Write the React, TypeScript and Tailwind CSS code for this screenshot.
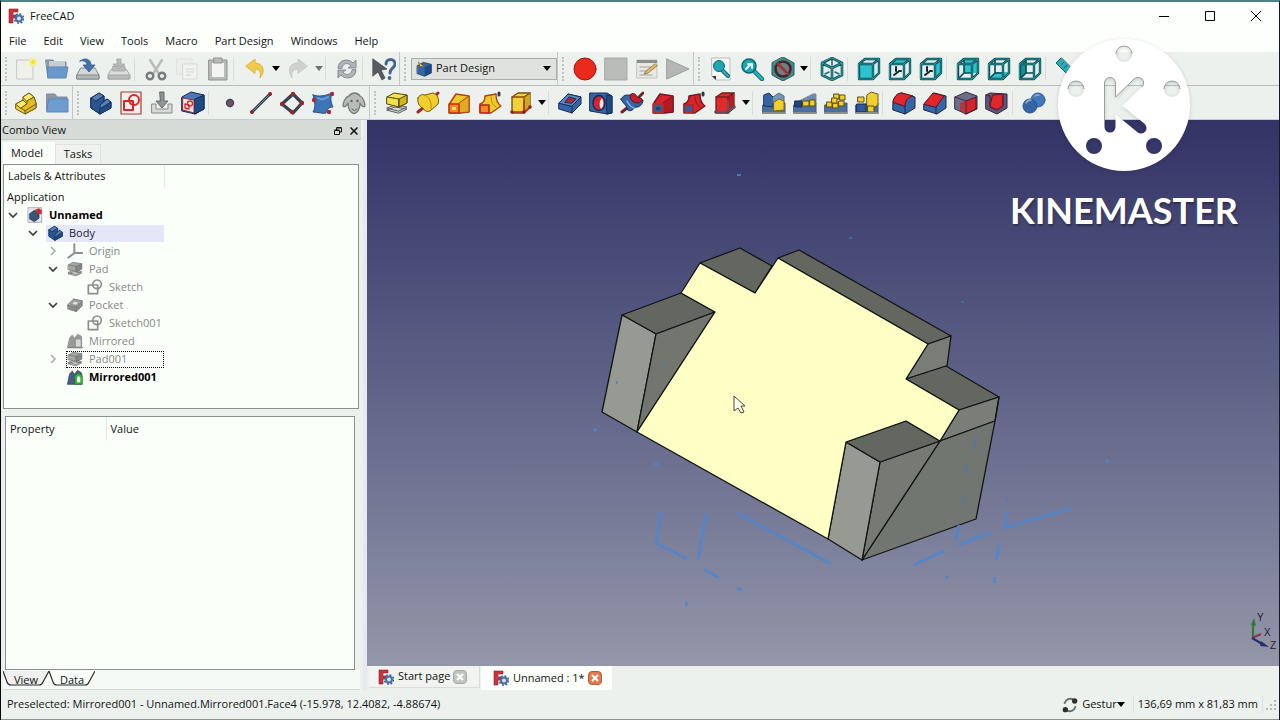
import React from "react";
import type { ReactNode } from "react";

/* ---------- toolbar glyphs, all on a 24 x 24 grid ---------- */

const Glyph = ({ children, size = "size-6" }: { children: ReactNode; size?: string }) => (
  <svg viewBox="0 0 24 24" className={`${size} shrink-0`} strokeLinejoin="round" strokeLinecap="round" fill="none" aria-hidden="true">
    {children}
  </svg>
);

const FreeCadLogo = ({ size = "size-4" }: { size?: string }) => (
  <svg viewBox="0 0 16 16" className={`${size} shrink-0`} aria-hidden="true">
    <path d="M1 1h9v3H5v3h3v3H5v5H1z" fill="#cb333b" stroke="#8f1d25" strokeWidth=".6" />
    <circle cx="11" cy="10.500" r="4.600" fill="none" stroke="#3d5f94" strokeWidth="1.600" strokeDasharray="1.900 1.700" />
    <circle cx="11" cy="10.500" r="3" fill="#d7e2f2" stroke="#4a6ea6" strokeWidth="2" />
  </svg>
);

const NewDoc = () => (
  <Glyph>
    <path d="M3 3h16v19H3z" fill="#f1f1ec" stroke="#c6c8c2" />
    <circle cx="19" cy="5" r="4" fill="#f7f08a" />
    <circle cx="19" cy="5" r="2" fill="#f4e32a" />
  </Glyph>
);
const Folder = () => (
  <Glyph>
    <path d="M2 3h8l2 3h10v13H2z" fill="#8797a8" stroke="#7e8b99" />
    <path d="M4 8h19v13H2z" fill="#6e9ccf" stroke="#5a87bd" />
  </Glyph>
);
const OpenDoc = () => (
  <Glyph>
    <path d="M1 3h7l2 2h11v14H3z" fill="#8b98a8" stroke="#7e8997" />
    <path d="M4 4h16v7H4z" fill="#c5ccd3" />
    <path d="M3 10h20l-2 11H3z" fill="#6c97cb" stroke="#5b86bb" />
  </Glyph>
);
const SaveDoc = () => (
  <Glyph>
    <path d="M5 11h14l4 7v4H1v-4z" fill="#d4d7d4" stroke="#84898c" />
    <path d="M1 18h22v4H1z" fill="#b3b8b8" stroke="#84898c" />
    <path d="M4 4C9 0 15 2 15 8h4l-6 7-6-7h4c0-3-3-5-7-4z" fill="#4472ad" stroke="#2f5a94" strokeWidth=".8" />
  </Glyph>
);
const SaveGrey = () => (
  <Glyph>
    <path d="M5 12h14l4 6v4H1v-4z" fill="#dcdedb" stroke="#a1a5a3" />
    <path d="M2 18h20v4H2z" fill="#b9bcba" stroke="#a1a5a3" />
    <path d="M6 9h12v5H6zM10 2h4v5h4l-6 5-6-5h4z" fill="#b9bcba" stroke="#a1a5a3" strokeWidth=".8" />
  </Glyph>
);
const Scissors = () => (
  <Glyph>
    <path d="M6 3l9 14M18 3L9 17" stroke="#b8bbb9" strokeWidth="2.500" />
    <circle cx="6" cy="19" r="3.300" stroke="#777c7d" strokeWidth="2.400" />
    <circle cx="18" cy="19" r="3.300" stroke="#777c7d" strokeWidth="2.400" />
  </Glyph>
);
const CopyIcon = () => (
  <Glyph>
    <path d="M2 2h15v15H2z" fill="#eceeea" stroke="#dfe2de" />
    <path d="M8 7h14v15H8z" fill="#f3f4f1" stroke="#d5d8d4" />
    <path d="M11 12h8M11 15h8M11 18h5" stroke="#d0d3d0" />
  </Glyph>
);
const PasteIcon = () => (
  <Glyph>
    <path d="M3 3h18v20H3z" fill="#b9bbb8" stroke="#8e9290" />
    <path d="M6 6h12v14H6z" fill="#f4f5f2" />
    <path d="M8 1h8v5H8z" fill="#b9bbb8" stroke="#8e9290" />
  </Glyph>
);
const UndoIcon = () => (
  <Glyph>
    <path d="M3 9l9-7v4c8 0 11 8 5 15 1-6 0-9-5-9v4z" fill="#f0ca4a" stroke="#e0b53a" />
  </Glyph>
);
const RedoIcon = () => (
  <Glyph>
    <path d="M21 9l-9-7v4C3 6 1 14 6 21c-1-6 1-9 6-9v4z" fill="#cfd1ce" stroke="#c6c9c6" />
  </Glyph>
);
const RefreshIcon = () => (
  <Glyph>
    <path d="M3 11C3 2 14 1 18 6l3-3v8h-8l3-2c-3-4-8-3-9 2zM21 13c0 9-11 10-15 5l-3 3v-8h8l-3 2c3 4 8 3 9-2z" fill="#aeb4b7" stroke="#80878b" strokeWidth=".9" />
  </Glyph>
);
const WhatsThis = () => (
  <Glyph>
    <path d="M1 2l14 10-6 1 4 8-3 2-4-8-5 4z" fill="#555b60" stroke="#3b4044" strokeWidth=".7" />
    <path d="M14 7c0-6 9-6 9 0 0 4-5 4-5 9" stroke="#43658f" strokeWidth="3" />
    <circle cx="17.500" cy="21" r="1.900" fill="#43658f" />
  </Glyph>
);
const RecordIcon = () => (
  <Glyph>
    <circle cx="12" cy="12" r="11" fill="#ea2a1d" stroke="#9a1a12" />
  </Glyph>
);
const StopIcon = () => (
  <Glyph>
    <path d="M1 1h22v22H1z" fill="#b9bbb9" stroke="#a6a9a6" />
  </Glyph>
);
const MacroEdit = () => (
  <Glyph>
    <path d="M2 3h20v18H2z" fill="#e7e8e3" stroke="#c3c5c0" />
    <path d="M2 3h20v3H2z" fill="#8d918e" />
    <path d="M5 10h11M5 14h8M5 18h12" stroke="#b7b9b5" strokeWidth="1.500" />
    <path d="M22 9l-9 7-4 1 2-3 9-7z" fill="#e7b96a" stroke="#8b6b35" strokeWidth=".8" />
  </Glyph>
);
const PlayIcon = () => (
  <Glyph>
    <path d="M1 2l22 10L1 22z" fill="#b4b7b5" stroke="#9b9f9c" />
  </Glyph>
);
const FitAll = () => (
  <Glyph>
    <path d="M3 1h18v22H7l-4-4z" fill="#f6f7f5" stroke="#b9bcba" />
    <path d="M13 13l6 6" stroke="#0b6670" strokeWidth="4" />
    <path d="M13 13l6 6" stroke="#26b3c0" strokeWidth="2" />
    <circle cx="10" cy="9" r="5.500" fill="#1fa6b3" stroke="#0b6670" />
    <path d="M3 19l4 4v-4z" fill="#333" />
  </Glyph>
);
const FitSelection = () => (
  <Glyph>
    <path d="M13 13l9 9" stroke="#0b6670" strokeWidth="4.500" />
    <path d="M13 13l9 9" stroke="#26b3c0" strokeWidth="2.500" />
    <circle cx="9" cy="9" r="7" fill="#1fa6b3" stroke="#0b6670" strokeWidth="1.500" />
    <path d="M6 12l5-5M8 7h4v4" stroke="#d9f7fa" strokeWidth="2" />
  </Glyph>
);
const DrawStyle = () => (
  <Glyph>
    <path d="M12 0l11 6v12l-11 6-11-6V6z" fill="#3c8c8c" stroke="#235f60" />
    <circle cx="12" cy="12" r="7.500" fill="#6f7f7f" stroke="#4a2428" strokeWidth="2.600" />
    <path d="M7 7l10 10" stroke="#a03236" strokeWidth="2.600" />
  </Glyph>
);
const IsoCube = () => (
  <Glyph>
    <path d="M12 1l10 5v12l-10 5-10-5V6z" fill="#e2efee" />
    <path d="M12 1l10 5v12l-10 5-10-5V6zM2 6l10 5 10-5M12 11v12" stroke="#0c4a50" strokeWidth="2.600" />
    <path d="M12 3v5M5 17l4-2M19 17l-4-2" stroke="#2c6c70" strokeWidth="1.600" />
    <path d="M12 1l10 5v12l-10 5-10-5V6zM2 6l10 5 10-5M12 11v12" stroke="#3aa7ae" strokeWidth="1" />
  </Glyph>
);
const faces: Record<string, string> = {
  front: "M2 7h14v15H2z",
  top: "M2 7l6-5h14l-6 5z",
  right: "M16 7l6-5v14l-6 6z",
  rear: "M8 3h13v13H8z",
  bottom: "M2 22l6-7h14l-6 7z",
  left: "M2 7l6-5v14l-6 6z",
};
const ViewCube = ({ face }: { face: string }) => (
  <Glyph>
    <path d="M2 7l6-5h14v14l-6 6H2z" fill={face === "front" ? "#cdeef0" : "#e2efee"} />
    <path d={faces[face]} fill={face === "left" ? "#178f97" : "#2bc3cf"} />
    {(face === "rear" || face === "bottom" || face === "left") && (
      <path d="M8 3v13l-5 5M8 16h8" stroke="#0c4a50" strokeWidth="1.600" />
    )}
    {(face === "top" || face === "right") && <path d="M8 10v4M6 18l4-3M11 14h2" stroke="#16282b" strokeWidth="2" />}
    <path d="M2 7h14v15H2zM2 7l6-5h14l-6 5M22 2v14l-6 6" stroke="#0c4a50" strokeWidth="2.400" />
    <path d="M2 7h14v15H2zM2 7l6-5h14l-6 5M22 2v14l-6 6" stroke="#2fa9b2" strokeWidth=".8" />
  </Glyph>
);
const Ruler = () => (
  <Glyph>
    <path d="M6 1L1 6l17 17 5-5z" fill="#2cabb5" stroke="#0c5f67" />
    <path d="M9 5l-2 2M12 8l-3 3M15 11l-2 2M18 14l-3 3" stroke="#0c5f67" />
  </Glyph>
);

const PartYellow = () => (
  <Glyph>
    <g stroke="#6f5a10">
      <path d="M2 13l7-4V6l6-4 5 4 2 6v5l-11 6-9-5z" fill="#eccf34" />
      <path d="M9 6l6-4 5 4-7 4zM2 13l7-4 4 4-6 4z" fill="#fbea70" />
      <path d="M7 17l6-4v-3l7-4 2 6v5l-11 6v-3z" fill="#dfbc28" />
      <path d="M11 20l11-7" />
    </g>
  </Glyph>
);
const BodyBlue = ({ size }: { size?: string }) => (
  <Glyph size={size}>
    <g stroke="#1a3260">
      <path d="M3 7l8-5 5 3v5l3-2 4 3v6l-11 6-9-6z" fill="#3465a4" />
      <path d="M3 7l8-5 5 3-8 5zM12 14l7-6 4 3-11 7z" fill="#5581b8" />
      <path d="M8 10l8-5v5l-4 4v9l-9-6V7z" fill="#2b5693" />
      <path d="M12 18l11-7v6l-11 6z" fill="#244b86" />
    </g>
  </Glyph>
);
const SketchRed = () => (
  <Glyph>
    <path d="M2 1h20v22H2z" fill="#f7efec" stroke="#a33a3a" strokeWidth="1.200" />
    <path d="M5 10h9v9H5z" stroke="#d22828" strokeWidth="2" />
    <circle cx="15" cy="9" r="5" stroke="#d22828" strokeWidth="2" />
  </Glyph>
);
const ImportSketch = () => (
  <Glyph>
    <path d="M2 13h4v5h12v-5h4v9H2z" fill="#d8dad7" stroke="#85898a" />
    <path d="M10 1h4v9h4l-6 7-6-7h4z" fill="#8f9394" stroke="#65696b" />
  </Glyph>
);
const MapSketch = () => (
  <Glyph>
    <path d="M1 6l9-5 13 3v14l-9 5-13-3z" fill="#4a79b8" stroke="#15294f" />
    <path d="M14 8l9-4v14l-9 5z" fill="#204a87" stroke="#15294f" />
    <path d="M2 7l11 2v13L2 19z" fill="#f3e2e2" stroke="#802f3a" />
    <path d="M4 13l4 1v4l-4-1z" stroke="#d22828" strokeWidth="1.300" />
    <circle cx="9" cy="12.500" r="2.500" stroke="#d22828" strokeWidth="1.300" />
  </Glyph>
);
const PointIcon = () => <Glyph><circle cx="12" cy="12" r="3.500" fill="#75525f" stroke="#3f4657" strokeWidth="1.400" /></Glyph>;
const LineIcon = () => (
  <Glyph>
    <path d="M3 21L21 3" stroke="#36404c" strokeWidth="3" />
    <path d="M3 21L21 3" stroke="#7a8894" />
    <circle cx="3" cy="21" r="2" fill="#8b2430" />
    <circle cx="21" cy="3" r="2" fill="#8b2430" />
  </Glyph>
);
const PlaneIcon = () => (
  <Glyph>
    <path d="M2 13L13 3l9 9-9 10z" stroke="#38414d" strokeWidth="3.200" />
    {[[2, 13], [13, 3], [22, 12], [12, 21]].map(([x, y]) => <circle key={x} cx={x} cy={y} r="2.200" fill="#9b2632" />)}
  </Glyph>
);
const ShapeBinder = () => (
  <Glyph>
    <path d="M2 4c6 2 12 1 19-2-2 5-1 10 1 14-5 0-6 3-7 6-4 1-8-1-13-1 3-5 2-10 0-17z" fill="#3d74b5" stroke="#234f8a" />
    <path d="M7 7c3 2 7 1 10-1" stroke="#6f9fd4" strokeWidth="2" />
    {[[3, 9], [21, 3], [18, 21]].map(([x, y]) => <circle key={x} cx={x} cy={y} r="2.200" fill="#a52a3a" />)}
  </Glyph>
);
const SheepIcon = () => (
  <Glyph>
    <path d="M7 5c3-4 8-4 11 0 3 1 5 7 5 10-2 2-4-1-5-3 0 5-2 8-3 9-2 2-4 2-6 0-1-1-3-4-3-9-1 2-3 5-5 3 0-3 2-9 6-10z" fill="#b9bcb9" stroke="#777c7c" strokeWidth="1.300" />
    <circle cx="9.500" cy="10" r="1.200" fill="#626767" />
    <circle cx="15.500" cy="10" r="1.200" fill="#626767" />
    <path d="M10 18l2.500 1.500L15 18" stroke="#626767" />
  </Glyph>
);

const PadIcon = ({ grey, size }: { grey?: boolean; size?: string }) => {
  const s = grey ? "#6f7271" : "#4d4708";
  const f = grey ? "#a3a6a4" : "#f4e04a";
  const d = grey ? "#858886" : "#d1b51d";
  return (
    <Glyph size={size}>
      <path d="M2 19l8-3 12 2-8 4zM2 17l8-3 12 2-8 4z" fill="#d9dbd8" stroke="#5c605e" />
      <path d="M2 6l7-4 13 2v8l-8 4-12-3z" fill={f} stroke={s} />
      <path d="M14 8l8-4v8l-8 4z" fill={d} stroke={s} />
      <path d="M2 6l12 2v8" stroke={s} />
    </Glyph>
  );
};
const RevolveIcon = () => (
  <Glyph>
    <path d="M2 21l6-5M18 6l4-4" stroke="#a52828" strokeWidth="3" />
    <path d="M2 7c1-3 4-4 7-3l8-2c4 1 7 6 5 11l-8 7c-3 1-6 0-7-3-4-1-6-6-5-10z" fill="#efce2d" stroke="#6f5a10" />
    <path d="M9 4c4 2 7 7 6 14" stroke="#b08f16" />
  </Glyph>
);
const LoftIcon = ({ red }: { red?: boolean }) => (
  <Glyph>
    <path d="M3 12L9 3l13 2v16l-9 1H3z" fill={red ? "#d8232a" : "#f0c92b"} stroke={red ? "#6e1a24" : "#b54216"} strokeWidth="1.600" />
    <path d="M12 12L22 5v16l-10 1z" fill={red ? "#b31a22" : "#e0ac1e"} stroke={red ? "#6e1a24" : "#b54216"} />
    <path d="M2 13h10v9H2z" fill={red ? "#3b5a94" : "#ef8a1e"} stroke="#c22a1e" strokeWidth="1.600" />
    <path d="M5 16h4v3H5z" fill={red ? "#24406f" : "#f9d56a"} />
  </Glyph>
);
const PipeIcon = ({ red }: { red?: boolean }) => (
  <Glyph>
    <path d="M7 5l11-2c0 5 2 10 5 12l-10 7-11-1v-8c3-1 5-4 5-8z" fill={red ? "#d8232a" : "#f0c92b"} stroke={red ? "#6e1a24" : "#a84416"} strokeWidth="1.400" />
    <path d="M13 6c0 5 2 8 5 10" stroke={red ? "#8c1a22" : "#b58a18"} />
    <path d="M2 14h9v8H2z" fill={red ? "#3b5a94" : "#ef8a1e"} stroke="#b5251c" strokeWidth="1.600" />
    <path d="M21 2v2" stroke="#35364d" strokeWidth="3" />
  </Glyph>
);
const PrimitiveCube = ({ red }: { red?: boolean }) => (
  <Glyph>
    <path d="M3 6l6-4h12v15l-6 5H3z" fill={red ? "#e12a2a" : "#f1d237"} stroke={red ? "#6e1a24" : "#6f4b10"} strokeWidth="1.300" />
    <path d="M15 6l6-4v15l-6 5z" fill={red ? "#b81c20" : "#cfa71b"} />
    <path d="M3 6h12v16M15 6l6-4" stroke={red ? "#7b1b22" : "#8d4a12"} strokeWidth="1.300" />
    <path d="M3 21h12l6-5M15 21V10" stroke={red ? "#59606e" : "#b4302a"} strokeWidth="1.500" />
    {[[3, 21], [15, 21], [21, 16]].map(([x, y]) => <circle key={x} cx={x} cy={y} r="1.800" fill={red ? "#4c535e" : "#8c2424"} />)}
  </Glyph>
);
const PocketIcon = ({ grey, size }: { grey?: boolean; size?: string }) => {
  const e = grey ? "#6f7271" : "#152d55";
  return (
    <Glyph size={size}>
      <path d="M1 12L10 3l13 3v7l-9 9-13-4z" fill={grey ? "#8b8e8c" : "#3465a4"} stroke={e} />
      <path d="M1 12L10 3l13 3-9 9z" fill={grey ? "#a5a8a6" : "#5a86be"} stroke={e} />
      <path d="M7 11l4-5 7 2-4 4z" fill={grey ? "#e6e7e5" : "#b32430"} stroke={e} />
      <path d="M14 15v7" stroke={e} />
    </Glyph>
  );
};
const HoleIcon = () => (
  <Glyph>
    <path d="M1 2h17l5 3v17l-5 1-17-3z" fill="#3465a4" stroke="#152d55" />
    <path d="M18 4l5 1v17l-5 1z" fill="#204a87" stroke="#152d55" />
    <ellipse cx="10" cy="12" rx="6" ry="7.500" fill="#d4252c" stroke="#152d55" strokeWidth="1.500" />
    <path d="M13 7c-3 3-3 8-1 11 3-2 3-8 1-11z" fill="#e9e6ea" />
  </Glyph>
);
const GrooveIcon = () => (
  <Glyph>
    <path d="M2 21l5-4M19 6l4-4" stroke="#6f2330" strokeWidth="3" />
    <path d="M1 8c3-5 8-5 11-2 2 3 6 4 11 3 0 5-5 8-8 7-2 4-7 5-8 2 0-4-4-5-6-10z" fill="#3465a4" stroke="#152d55" />
    <path d="M10 4c3-3 6-1 7 2l5 2c0 4-4 5-8 3-3-1-4-4-4-7z" fill="#c3202b" stroke="#5a1722" />
    <path d="M7 10c2 4 4 6 7 7" stroke="#8fb0da" strokeWidth="1.500" />
  </Glyph>
);
const PatternBase = ({ children }: { children: ReactNode }) => (
  <Glyph>
    <path d="M1 14l22-2v10H1z" fill="#4d6f9f" stroke="#46597a" />
    {children}
    <path d="M1 22h22" stroke="#8c8f8c" strokeWidth="2" />
  </Glyph>
);
const MirrorIcon = () => (
  <PatternBase>
    <path d="M2 4l5-2 4 4v10l-9-1z" fill="#3465a4" stroke="#1d355e" />
    <path d="M11 6l6-4 5 3v7H11z" fill="#7995ba" stroke="#4f678c" />
    <path d="M12 11l5-3 5 2v9l-10 1z" fill="#efd02f" stroke="#806712" />
  </PatternBase>
);
const LinearIcon = () => (
  <PatternBase>
    <path d="M2 12L20 3h3v10l-21 4z" fill="#6d8ab2" stroke="#7488a5" />
    <path d="M2 10h7v6H2z" fill="#24457c" stroke="#152d55" />
    <path d="M10 10h6v5h-6zM17 9h5v6h-5z" fill="#efd02f" stroke="#5c4b10" />
  </PatternBase>
);
const PolarIcon = () => (
  <PatternBase>
    {[[3, 11], [9, 12], [15, 10], [16, 4], [10, 3], [8, 7]].map(([x, y]) => (
      <path key={`${x}-${y}`} d={`M${x} ${y}h5v5h-5z`} fill="#efd02f" stroke="#5c4b10" />
    ))}
  </PatternBase>
);
const MultiIcon = () => (
  <PatternBase>
    <path d="M12 4l4-3 7 2v11l-5 3-6-2z" fill="#efd02f" stroke="#6f5a10" />
    <path d="M3 6h6v5H3zM13 15h6v6h-6z" fill="#efd02f" stroke="#5c4b10" />
    <path d="M2 13h9v8H2z" fill="#31589a" stroke="#152d55" />
  </PatternBase>
);
const FilletIcon = () => (
  <Glyph>
    <path d="M1 11c1-5 4-9 9-9l13 4v11l-10 6-12-4z" fill="#3465a4" stroke="#2b2440" />
    <path d="M1 11c1-5 4-9 9-9l11 3c-5 1-8 5-8 10z" fill="#e3262a" stroke="#5a1722" />
    <path d="M13 15v8" stroke="#152d55" />
  </Glyph>
);
const ChamferIcon = () => (
  <Glyph>
    <path d="M1 13l10-11 12 3v12l-9 6-13-4z" fill="#3465a4" stroke="#2b2440" />
    <path d="M1 13L10 2l11 3-8 11z" fill="#e3262a" stroke="#5a1722" />
    <path d="M13 16v7" stroke="#152d55" />
  </Glyph>
);
const DraftIcon = () => (
  <Glyph>
    <path d="M1 6l11-5 11 4v13l-11 5-11-5z" fill="#6a6f8b" stroke="#3a2c3c" />
    <path d="M12 10l10-4v12l-10 5z" fill="#d4252c" stroke="#4d1a26" />
    <path d="M6 12l6-2v12l-6-2z" fill="#b83440" />
    <path d="M1 6l11 4v12" stroke="#4d2a36" />
  </Glyph>
);
const ThicknessIcon = () => (
  <Glyph>
    <path d="M1 4l4-2 17 1v14l-10 6-11-5z" fill="#59597e" stroke="#3a2440" />
    <path d="M8 4l10-1v12l-6 4-7-3z" fill="#e3262a" stroke="#5a1722" />
    <path d="M1 4l4 1v11l7 3 6-4V4" stroke="#6b2236" strokeWidth="1.500" />
  </Glyph>
);
const BooleanIcon = () => (
  <Glyph>
    <circle cx="16" cy="9" r="7" fill="#4277b8" stroke="#2f5a94" />
    <circle cx="8" cy="15" r="7" fill="#3465a4" stroke="#2b568f" />
    <path d="M4 12c1-2 3-3 5-3M13 5c1-1 3-1 4-1" stroke="#8db2de" strokeWidth="1.500" />
  </Glyph>
);

const DownArrow = ({ tone = "text-black" }: { tone?: string }) => (
  <svg viewBox="0 0 8 5" className={`h-[5px] w-2 shrink-0 ${tone}`} aria-hidden="true">
    <path d="M0 0h8L4 5z" fill="currentColor" />
  </svg>
);

/* ---------- toolbar pieces ---------- */

const Tool = ({ name, children }: { name: string; children: ReactNode }) => (
  <button type="button" aria-label={name} className="flex h-8 w-[31px] shrink-0 items-center justify-center">
    {children}
  </button>
);
const Drop = ({ name, tone }: { name: string; tone?: string }) => (
  <button type="button" aria-label={name} className="flex h-8 w-3 shrink-0 items-center justify-center">
    <DownArrow tone={tone} />
  </button>
);
const Sep = () => <span className="mr-[5px] h-6 w-px shrink-0 bg-[#d9ddda]" />;
const Bar = ({ first, children }: { first?: boolean; children: ReactNode }) => (
  <div className={`flex h-full shrink-0 items-center ${first ? "" : "border-l border-[#c3c8c5]"}`}>
    <span className={`${first ? "mr-[2px] ml-1" : "mr-1 ml-1"} h-6 w-[3px] border-l-2 border-dotted border-[#c0c4c1]`} />
    {children}
  </div>
);

/* ---------- model tree ---------- */

type Row = { label: string; indent: string; state: "open" | "closed" | "leaf"; icon: ReactNode; kind: "bold" | "active" | "dim" | "focus" };

const AppDoc = () => (
  <Glyph size="size-4">
    <path d="M2 1h20v22H2z" fill="#e6e8ef" stroke="#8a90a0" />
    <path d="M4 10l7-5 7 4v8l-7 5-7-4z" fill="#3a5675" stroke="#1f3246" />
    <path d="M12 4l6-2 4 3v6l-6-1z" fill="#cc2b36" />
  </Glyph>
);
const OriginIcon = () => (
  <Glyph size="size-4">
    <path d="M11 2v13M11 15h12M11 15l-9 7" stroke="#8d908e" strokeWidth="3" />
  </Glyph>
);
const SketchGrey = () => (
  <Glyph size="size-4">
    <path d="M2 9h14v13H2z" stroke="#8b8e8c" strokeWidth="2.500" />
    <circle cx="15" cy="8" r="6.500" stroke="#8b8e8c" strokeWidth="2.500" />
  </Glyph>
);
const MirrorGrey = () => (
  <Glyph size="size-4">
    <path d="M1 20L4 7l4-4 3 5 5-6 6 3v17H1z" fill="#979a98" stroke="#858886" />
    <path d="M13 9h8v12h-8z" fill="#d5d7d4" stroke="#858886" />
    <path d="M2 22h21" stroke="#858886" strokeWidth="2" />
  </Glyph>
);
const MirrorTip = () => (
  <Glyph size="size-4">
    <path d="M1 21L4 7l4-4 3 5 5-6 6 4v17H1z" fill="#4b5d84" stroke="#293650" />
    <path d="M12 10l5-4 6 4v13H12z" fill="#3cae3c" stroke="#1d7a25" />
    <path d="M15 13l2-3 3 3v7h-5z" fill="#f2fbef" />
  </Glyph>
);

const rows: Row[] = [
  { label: "Unnamed", indent: "pl-1", state: "open", icon: <AppDoc />, kind: "bold" },
  { label: "Body", indent: "pl-6", state: "open", icon: <BodyBlue size="size-4" />, kind: "active" },
  { label: "Origin", indent: "pl-11", state: "closed", icon: <OriginIcon />, kind: "dim" },
  { label: "Pad", indent: "pl-11", state: "open", icon: <PadIcon grey size="size-4" />, kind: "dim" },
  { label: "Sketch", indent: "pl-16", state: "leaf", icon: <SketchGrey />, kind: "dim" },
  { label: "Pocket", indent: "pl-11", state: "open", icon: <PocketIcon grey size="size-4" />, kind: "dim" },
  { label: "Sketch001", indent: "pl-16", state: "leaf", icon: <SketchGrey />, kind: "dim" },
  { label: "Mirrored", indent: "pl-11", state: "leaf", icon: <MirrorGrey />, kind: "dim" },
  { label: "Pad001", indent: "pl-11", state: "closed", icon: <PadIcon grey size="size-4" />, kind: "focus" },
  { label: "Mirrored001", indent: "pl-11", state: "leaf", icon: <MirrorTip />, kind: "bold" },
];

const kinds = {
  bold: "font-bold text-black",
  active: "bg-[#e4e7f8] text-[#1c2434]",
  dim: "text-[#858986]",
  focus: "text-[#858986] outline-1 outline-dotted -outline-offset-1 outline-black",
};

const TreeRow = ({ row }: { row: Row }) => (
  <li className={`flex h-[18px] w-40 items-center ${row.indent}`}>
    <span className="flex w-[18px] shrink-0 items-center">
      {row.state !== "leaf" && (
        <svg viewBox="0 0 10 10" className="size-[10px]" fill="none" aria-hidden="true">
          {row.state === "open" ? (
            <path d="M1 3l4 4 4-4" stroke="#3c403d" strokeWidth="1.700" />
          ) : (
            <path d="M3 1l4 4-4 4" stroke="#a9adaa" strokeWidth="1.500" />
          )}
        </svg>
      )}
    </span>
    <span className={`flex h-[17px] grow items-center gap-[6px] pl-px whitespace-nowrap ${kinds[row.kind]}`}>
      {row.icon}
      {row.label}
    </span>
  </li>
);

const BottomTab = ({ label, active }: { label: string; active?: boolean }) => (
  <button type="button" role="tab" aria-selected={!!active} className="relative h-4 w-[46px] text-center leading-[15px]">
    <svg viewBox="0 0 46 16" className="absolute inset-0 size-full" fill={active ? "#fbfffa" : "#eef1ed"} aria-hidden="true">
      <path d="M0 0l4 11q1 3 4 3h28q3 0 4-3l6-11" stroke="#2b2f2c" strokeWidth="1.200" />
    </svg>
    <span className="relative">{label}</span>
  </button>
);

const CloseTab = ({ active, name }: { active?: boolean; name: string }) => (
  <button
    type="button"
    aria-label={name}
    className={`flex size-[14px] items-center justify-center rounded-sm border ${active ? "border-[#b85a35] bg-[#e07a50]" : "border-[#a3a8a5] bg-[#c0c5c2]"}`}
  >
    <svg viewBox="0 0 8 8" className="size-2" aria-hidden="true">
      <path d="M1 1l6 6M7 1L1 7" stroke="#fff" strokeWidth="2" />
    </svg>
  </button>
);

/* ---------- 3D scene ---------- */

const Scene = () => (
  <svg viewBox="367 120 912 546" preserveAspectRatio="xMidYMid slice" className="absolute inset-0 size-full" aria-label="Solid model">
    <g stroke="#111512" strokeWidth="1.300" strokeLinejoin="round">
      <path d="M700 263l40-15 32 18-17 27z" fill="#63675f" />
      <path d="M778 258l21-8 152 86-23 8z" fill="#63675f" />
      <path d="M928 344l23-8-4 30-41 13z" fill="#797d75" />
      <path d="M906 379l40-13 53 31-40 13z" fill="#63675f" />
      <path d="M622 315l59-22 34 19-59 22z" fill="#63675f" />
      <path d="M622 315l34 19-19 98-35-20z" fill="#969a93" />
      <path d="M656 334l59-22-78 120z" fill="#72766e" />
      <path d="M959 410l40-13-4 24-55 20z" fill="#7a7e76" />
      <path d="M940 441l55-20-19 98-114 41z" fill="#727670" />
      <path d="M880 462l60-21-78 119z" fill="#767a72" />
      <path d="M846 442l34 20-18 98-34-21z" fill="#969a93" />
      <path d="M846 442l60-21 34 20-60 21z" fill="#63675f" />
      <path d="M700 263l55 30 23-35 150 86-22 35 53 31-19 31-34-20-60 21-18 97-191-107 78-120-34-19z" fill="#feffc4" />
      <path d="M999 397l-4 24" />
    </g>
    <g stroke="#4d86d0" strokeWidth="3" fill="none" opacity=".8">
      <path d="M661 512l-5 31 31 16M706 513l-8 46M737 513l94 51M704 569l15 9" />
      <path d="M914 565l30-14M959 545l32-13M1004 528l67-20M1007 512l-1 14M959 525l-3 16M999 545l-3 15M994 577l1 6" />
      <path d="M737 588l5 2M686 602l1 4M593 430h4M1105 461h4M945 577h4M654 464h4" />
      <path d="M737 175h4" strokeWidth="2" />
    </g>
    <g stroke="#4d78ad" strokeWidth="2" fill="none" opacity=".6">
      <path d="M976 435l-2 15M967 465l-1 10M964 495l-1 10M1007 497v4M664 362v4M617 381v3M637 436l6 2M961 302h3M849 238h3" />
    </g>
    <path d="M734 396v15l4-3 3 5 3-1-3-6h4z" fill="#fffdf2" stroke="#4c463b" strokeWidth="1" />
  </svg>
);

const AxisCross = () => (
  <svg viewBox="0 0 30 40" className="absolute right-0 bottom-[14px] h-10 w-[30px]" aria-hidden="true">
    <g strokeWidth="2.200" fill="none">
      <path d="M4 25V11" stroke="#2f7a35" />
      <path d="M3 26l9-4" stroke="#8f3344" />
      <path d="M3 26l12 7" stroke="#27306f" />
    </g>
    <path d="M2 13l3-7 2 8z" fill="#2f7a35" />
    <path d="M12 29l8 6-9-1z" fill="#27306f" />
    <g fontFamily="Liberation Sans, sans-serif" fontSize="10" fill="#20242c">
      <text x="8" y="9">Y</text>
      <text x="15" y="24">X</text>
      <text x="21" y="37">Z</text>
    </g>
  </svg>
);

/* A round badge whose holes let the page show through. */
const Watermark = () => (
  <div className="pointer-events-none absolute top-9 right-10 flex w-[230px] flex-col items-center">
    <svg viewBox="0 0 134 134" className="size-[134px] drop-shadow-sm" aria-hidden="true">
      <defs>
        <mask id="holes">
          <rect width="134" height="134" fill="#fff" />
          <circle cx="67" cy="16" r="8" />
          <circle cx="19" cy="51" r="8" />
          <circle cx="115" cy="51" r="8" />
          <circle cx="37" cy="108" r="8" />
          <circle cx="97" cy="108" r="8" />
          <path d="M53 45v44M81 45L57 68l27 22" fill="none" stroke="#000" strokeWidth="11" strokeLinecap="round" />
        </mask>
      </defs>
      <circle cx="67" cy="67" r="66" fill="#fff" mask="url(#holes)" />
      <g fill="none" stroke="#9a9d9b" strokeWidth="1">
        <path d="M59 16a8 8 0 0 1 16 0M11 51a8 8 0 0 1 16 0M107 51a8 8 0 0 1 16 0" />
        <path d="M47.500 84V45a5.500 5.500 0 0 1 11 0v14L77 41a5.500 5.500 0 0 1 8 8" />
      </g>
    </svg>
    <span className="mt-4 font-['Lato',sans-serif] text-[36px] leading-[44px] font-bold text-white [text-shadow:1px_2px_2px_#00000055]">KINEMASTER</span>
  </div>
);

const menus = ["File", "Edit", "View", "Tools", "Macro", "Part Design", "Windows", "Help"];

export default function App() {
  return (
    <div className="relative flex min-h-screen flex-col overflow-hidden border-t-2 border-r border-l border-t-[#4f8288] border-r-[#101c2c] border-l-[#05070a] bg-[#edf1ed] font-['Open_Sans','Noto_Sans',sans-serif] text-[11px] text-[#111412]">
      <header className="bg-[#fcfffc]">
        <div className="flex h-7 items-center justify-between pl-[7px]">
          <h1 className="flex items-center gap-[6px]">
            <FreeCadLogo />
            FreeCAD
          </h1>
          <div className="flex">
            <button type="button" aria-label="Minimize" className="flex h-7 w-[46px] items-center justify-center">
              <svg viewBox="0 0 10 10" className="size-[10px]"><path d="M0 5.500h10" stroke="#000" /></svg>
            </button>
            <button type="button" aria-label="Maximize" className="flex h-7 w-[46px] items-center justify-center">
              <svg viewBox="0 0 10 10" className="size-[10px]"><path d="M.5.500h9v9h-9z" fill="none" stroke="#000" /></svg>
            </button>
            <button type="button" aria-label="Close" className="flex h-7 w-[46px] items-center justify-center">
              <svg viewBox="0 0 10 10" className="size-[10px]"><path d="M0 0l10 10M10 0L0 10" stroke="#000" /></svg>
            </button>
          </div>
        </div>
        <nav className="flex h-[22px] items-center gap-[17px] pl-2">
          {menus.map((m) => <button type="button" key={m}>{m}</button>)}
        </nav>
      </header>

      <div className="flex h-[34px] items-center overflow-hidden border-b border-[#b9beba]">
        <Bar first>
          <Tool name="New"><NewDoc /></Tool>
          <Tool name="Open"><OpenDoc /></Tool>
          <Tool name="Save"><SaveDoc /></Tool>
          <Tool name="Save as"><SaveGrey /></Tool>
          <Sep />
          <Tool name="Cut"><Scissors /></Tool>
          <Tool name="Copy"><CopyIcon /></Tool>
          <Tool name="Paste"><PasteIcon /></Tool>
          <Sep />
          <Tool name="Undo"><UndoIcon /></Tool>
          <Drop name="Undo history" />
          <Tool name="Redo"><RedoIcon /></Tool>
          <Drop name="Redo history" tone="text-[#6f7471]" />
          <Sep />
          <Tool name="Refresh"><RefreshIcon /></Tool>
          <Sep />
          <Tool name="What's this"><WhatsThis /></Tool>
        </Bar>
        <Bar>
          <div className="flex h-[22px] w-[146px] items-center gap-1 border border-[#a9aeab] bg-[#dfe2df] pr-[5px] pl-1">
            <Glyph size="size-4">
              <path d="M2 7l9-5 12 3v13l-10 5-11-4z" fill="#3465a4" stroke="#152d55" />
              <path d="M13 9l10-4v13l-10 5z" fill="#204a87" />
              <path d="M4 2l9 7-7-1z" fill="#f4d834" stroke="#66560f" />
            </Glyph>
            <select aria-label="Workbench" className="min-w-0 grow appearance-none bg-transparent">
              <option>Part Design</option>
            </select>
            <DownArrow />
          </div>
        </Bar>
        <Bar>
          <Tool name="Record macro"><RecordIcon /></Tool>
          <Tool name="Stop macro"><StopIcon /></Tool>
          <Tool name="Macros"><MacroEdit /></Tool>
          <Tool name="Run macro"><PlayIcon /></Tool>
        </Bar>
        <Bar>
          <Tool name="Fit all"><FitAll /></Tool>
          <Tool name="Fit selection"><FitSelection /></Tool>
          <Tool name="Draw style"><DrawStyle /></Tool>
          <Drop name="Draw styles" />
          <Sep />
          <Tool name="Isometric"><IsoCube /></Tool>
          <Sep />
          <Tool name="Front"><ViewCube face="front" /></Tool>
          <Tool name="Top"><ViewCube face="top" /></Tool>
          <Tool name="Right"><ViewCube face="right" /></Tool>
          <Sep />
          <Tool name="Rear"><ViewCube face="rear" /></Tool>
          <Tool name="Bottom"><ViewCube face="bottom" /></Tool>
          <Tool name="Left"><ViewCube face="left" /></Tool>
          <Sep />
          <Tool name="Measure"><Ruler /></Tool>
        </Bar>
      </div>

      <div className="flex h-[34px] items-center overflow-hidden border-b border-[#c6cad8]">
        <Bar first>
          <Tool name="Create part"><PartYellow /></Tool>
          <Tool name="Create group"><Folder /></Tool>
        </Bar>
        <Bar>
          <Tool name="Create body"><BodyBlue /></Tool>
          <Tool name="Create sketch"><SketchRed /></Tool>
          <Tool name="Edit sketch"><ImportSketch /></Tool>
          <Tool name="Map sketch"><MapSketch /></Tool>
          <Sep />
          <Tool name="Datum point"><PointIcon /></Tool>
          <Tool name="Datum line"><LineIcon /></Tool>
          <Tool name="Datum plane"><PlaneIcon /></Tool>
          <Tool name="Shape binder"><ShapeBinder /></Tool>
          <Tool name="Clone"><SheepIcon /></Tool>
        </Bar>
        <Bar>
          <Tool name="Pad"><PadIcon /></Tool>
          <Tool name="Revolution"><RevolveIcon /></Tool>
          <Tool name="Additive loft"><LoftIcon /></Tool>
          <Tool name="Additive pipe"><PipeIcon /></Tool>
          <Tool name="Additive primitive"><PrimitiveCube /></Tool>
          <Drop name="Additive primitives" />
          <Sep />
          <Tool name="Pocket"><PocketIcon /></Tool>
          <Tool name="Hole"><HoleIcon /></Tool>
          <Tool name="Groove"><GrooveIcon /></Tool>
          <Tool name="Subtractive loft"><LoftIcon red /></Tool>
          <Tool name="Subtractive pipe"><PipeIcon red /></Tool>
          <Tool name="Subtractive primitive"><PrimitiveCube red /></Tool>
          <Drop name="Subtractive primitives" />
          <Sep />
          <Tool name="Mirrored"><MirrorIcon /></Tool>
          <Tool name="Linear pattern"><LinearIcon /></Tool>
          <Tool name="Polar pattern"><PolarIcon /></Tool>
          <Tool name="MultiTransform"><MultiIcon /></Tool>
          <Sep />
          <Tool name="Fillet"><FilletIcon /></Tool>
          <Tool name="Chamfer"><ChamferIcon /></Tool>
          <Tool name="Draft"><DraftIcon /></Tool>
          <Tool name="Thickness"><ThicknessIcon /></Tool>
          <Sep />
          <Tool name="Boolean"><BooleanIcon /></Tool>
        </Bar>
      </div>

      <div className="flex grow">
        <aside className="flex w-[366px] shrink-0 flex-col border-r-4 border-[#e6eaf0] pr-[2px]">
          <div className="flex h-5 items-center justify-between border-b border-[#c3c7c4] bg-[#d7dbd8] pt-[2px] pr-[3px] pl-px">
            <h2>Combo View</h2>
            <div className="flex gap-2">
              <button type="button" aria-label="Float panel">
                <svg viewBox="0 0 8 8" className="size-2" fill="none"><path d="M2.500 3V1h5v4H6M.5 3.500h5v4h-5zM.5 3h5M2.500 .5h5" stroke="#111" /></svg>
              </button>
              <button type="button" aria-label="Close panel">
                <svg viewBox="0 0 8 8" className="size-2"><path d="M.5.500l7 7M7.500.500l-7 7" stroke="#111" strokeWidth="1.500" /></svg>
              </button>
            </div>
          </div>
          <div role="tablist" className="flex h-6 items-end pl-[2px]">
            <button type="button" role="tab" aria-selected="true" className="h-[22px] w-[52px] bg-[#fbfffa] pr-1">Model</button>
            <button type="button" role="tab" aria-selected="false" className="h-5 w-[46px] border border-b-0 border-[#dfe3df] bg-[#eff2ee]">Tasks</button>
          </div>
          <div className="mr-[2px] ml-[2px] h-[245px] border border-[#8d918e] bg-[#fbfffa]">
            <div className="flex h-[23px] w-[161px] items-center border-r border-[#e6e9e5] pl-1">Labels &amp; Attributes</div>
            <div className="flex h-[18px] items-center pl-[3px]">Application</div>
            <ul>
              {rows.map((r) => <TreeRow key={r.label} row={r} />)}
            </ul>
          </div>
          <div className="mt-[7px] mr-[6px] ml-1 min-h-[253px] grow border border-[#8d918e] bg-[#fbfffa]">
            <table className="w-full table-fixed text-left">
              <thead>
                <tr className="h-6">
                  <th className="w-[100px] border-r border-[#e6e9e5] pl-1 font-normal">Property</th>
                  <th className="pl-1 font-normal">Value</th>
                </tr>
              </thead>
            </table>
          </div>
          <div role="tablist" className="mr-px ml-[2px] flex h-5 items-start border-b border-[#d4d8d4] bg-[#f6faf6] pt-px">
            <BottomTab label="View" />
            <BottomTab label="Data" active />
          </div>
        </aside>

        <main className="flex min-w-0 grow flex-col">
          <div className="relative min-h-[400px] grow overflow-hidden bg-linear-to-b from-[#333366] to-[#9497a9]">
            <Scene />
            <AxisCross />
          </div>
          <div role="tablist" className="flex h-6 items-start gap-px pl-[2px]">
            <div className="flex h-[22px] w-[111px] items-center gap-[3px] border-r border-b border-[#d9ddd9] bg-[#f0f3ef] pl-[9px]">
              <button type="button" role="tab" aria-selected="false" className="flex items-center gap-1 whitespace-nowrap">
                <FreeCadLogo />
                Start page
              </button>
              <CloseTab name="Close Start page" />
            </div>
            <div className="flex h-6 w-[131px] items-center gap-[3px] bg-[#fdfffc] pl-3">
              <button type="button" role="tab" aria-selected="true" className="flex items-center gap-1 whitespace-nowrap">
                <FreeCadLogo />
                Unnamed : 1*
              </button>
              <CloseTab active name="Close Unnamed" />
            </div>
          </div>
        </main>
      </div>

      <footer className="flex h-[30px] items-center justify-between border-b border-[#8f9491] pl-[6px]">
        <p>Preselected: Mirrored001 - Unnamed.Mirrored001.Face4 (-15.978, 12.4082, -4.88674)</p>
        <div className="flex items-center">
          <button type="button" className="flex items-center">
            <span className="flex items-center gap-1">
              <Glyph size="size-4">
                <path d="M4 9c2-6 8-8 13-5M20 15c-2 6-8 8-13 5" stroke="#6a706d" strokeWidth="3" />
                <circle cx="19" cy="6" r="4" fill="#2c302d" />
                <circle cx="5" cy="19" r="4" fill="#2c302d" />
              </Glyph>
              Gestur
            </span>
            <DownArrow />
          </button>
          <span className="ml-2 border-x border-[#dde1dd] px-1">136,69 mm x 81,83 mm</span>
          <svg viewBox="0 0 16 16" className="size-4 self-end" fill="#b4b9b6" aria-hidden="true">
            <path d="M11 3h2v2h-2zM11 7h2v2h-2zM11 11h2v2h-2zM7 7h2v2H7zM7 11h2v2H7zM3 11h2v2H3z" />
          </svg>
        </div>
      </footer>

      <Watermark />
    </div>
  );
}
